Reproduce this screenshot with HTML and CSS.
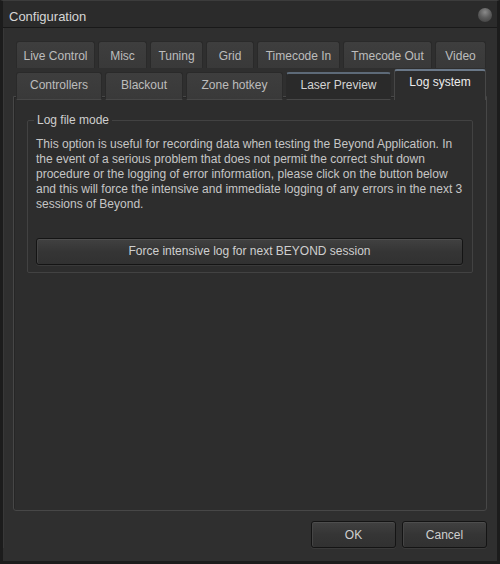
FILE: index.html
```html
<!DOCTYPE html>
<html>
<head>
<meta charset="utf-8">
<link rel="stylesheet" href="styles.css">
</head>
<body>
<div class="window">
  <div class="titlebar">
    <span class="title">Configuration</span>
    <span class="close"></span>
  </div>
  <div class="content">
    <div class="tabs">
      <div class="row row1">
        <div class="tab">Live Control</div>
        <div class="tab">Misc</div>
        <div class="tab">Tuning</div>
        <div class="tab">Grid</div>
        <div class="tab">Timecode In</div>
        <div class="tab">Tmecode Out</div>
        <div class="tab">Video</div>
      </div>
      <div class="row row2">
        <div class="tab">Controllers</div>
        <div class="tab">Blackout</div>
        <div class="tab">Zone hotkey</div>
        <div class="tab hover">Laser Preview</div>
        <div class="tab active">Log system</div>
      </div>
    </div>
    <div class="panel">
      <fieldset class="group">
        <legend>Log file mode</legend>
        <p class="desc">This option is useful for recording data when testing the Beyond Application. In<br>the event of a serious problem that does not permit the correct shut down<br>procedure or the logging of error information, please click on the button below<br>and this will force the intensive and immediate logging of any errors in the next 3<br>sessions of Beyond.</p>
        <button class="btn wide">Force intensive log for next BEYOND session</button>
      </fieldset>
    </div>
    <div class="actions">
      <button class="btn small">OK</button>
      <button class="btn small">Cancel</button>
    </div>
  </div>
</div>
</body>
</html>
```
FILE: styles.css
```css
html, body {
  margin: 0;
  padding: 0;
  background: #1c1c1c;
}
.window {
  width: 500px;
  height: 564px;
  box-sizing: border-box;
  background: #2f2f2f;
  border-left: 3px solid #1c1c1c;
  border-right: 3px solid #1c1c1c;
  border-bottom: 3px solid #1c1c1c;
  border-top: 1px solid #3c3c3c;
  font-family: "Liberation Sans", Arial, sans-serif;
  font-size: 12px;
  color: #c8c8c8;
}
.titlebar {
  height: 26px;
  background: #2b2b2b;
  border-bottom: 1px solid #191919;
  display: flex;
  align-items: center;
  justify-content: space-between;
  padding: 0 5px 0 6px;
}
.title {
  font-size: 13px;
  color: #d6d6d6;
  padding-top: 5px;
}
.close {
  width: 14px;
  height: 14px;
  border-radius: 50%;
  background: radial-gradient(circle at 50% 30%, #8a8a8a 0%, #5e5e5e 45%, #3a3a3a 100%);
  margin-top: 1px;
}
.content {
  padding: 0 10px;
  box-shadow: inset 1px 0 0 #383838;
}
.tabs {
  padding: 13px 0 0 3px;
  margin-bottom: -1px;
  position: relative;
  z-index: 1;
}
.row {
  display: grid;
  column-gap: 3px;
  align-items: end;
}
.row1 {
  grid-template-columns: 79px 49px 53px 48px 83px 89px 51px;
  height: 27px;
  margin-bottom: 1px;
}
.row2 {
  grid-template-columns: 86px 78px 97px 105px 92px;
  height: 28px;
}
.tab {
  height: 27px;
  box-sizing: border-box;
  background: linear-gradient(#3e3e3e, #393939);
  border: 1px solid #2a2a2a;
  border-bottom: none;
  border-radius: 3px 3px 0 0;
  display: flex;
  align-items: center;
  justify-content: center;
  color: #bdbdbd;
  font-size: 12px;
  padding-top: 2px;
}
.row2 .tab {
  height: 28px;
  border-bottom: 1px solid #474747;
  padding-top: 0;
  padding-bottom: 3px;
}
.tab.hover {
  background: #2a2a2a;
  border-top: 2px solid #5d6a78;
  color: #d4d4d4;
}
.row2 .tab.active {
  height: 31px;
  background: #2d2d2d;
  border: 1px solid #474747;
  border-top: 2px solid #6a7888;
  border-bottom: none;
  color: #ececec;
  padding-bottom: 8px;
}
.panel {
  height: 415px;
  box-sizing: border-box;
  border: 1px solid #474747;
  border-radius: 0 0 3px 3px;
  background: #2d2d2d;
  box-shadow: inset 1px 1px 0 #262626;
  padding: 16px 13px 0 13px;
}
.group {
  margin: 0;
  padding: 0 9px 7px 8px;
  border: 1px solid #424242;
  border-radius: 2px;
}
.group legend {
  padding: 0 3px;
  margin-left: -2px;
  color: #cfcfcf;
  font-size: 12px;
  line-height: 14px;
}
.desc {
  margin: 10px 0 26px 0;
  line-height: 15px;
  color: #c6c6c6;
  white-space: nowrap;
}
.btn {
  font-family: "Liberation Sans", Arial, sans-serif;
  font-size: 12px;
  color: #cfcfcf;
  height: 27px;
  box-sizing: border-box;
  border: 1px solid #141414;
  border-radius: 3px;
  background: linear-gradient(#414141, #353535 50%, #313131);
  box-shadow: inset 0 1px 0 #4e4e4e, inset 1px 0 0 #454545, 0 1px 0 #3a3a3a;
  padding: 0;
  display: block;
}
.btn.wide {
  width: 427px;
  padding-bottom: 1px;
}
.actions {
  display: flex;
  justify-content: flex-end;
  column-gap: 6px;
  margin-top: 10px;
}
.btn.small {
  width: 85px;
}
```
